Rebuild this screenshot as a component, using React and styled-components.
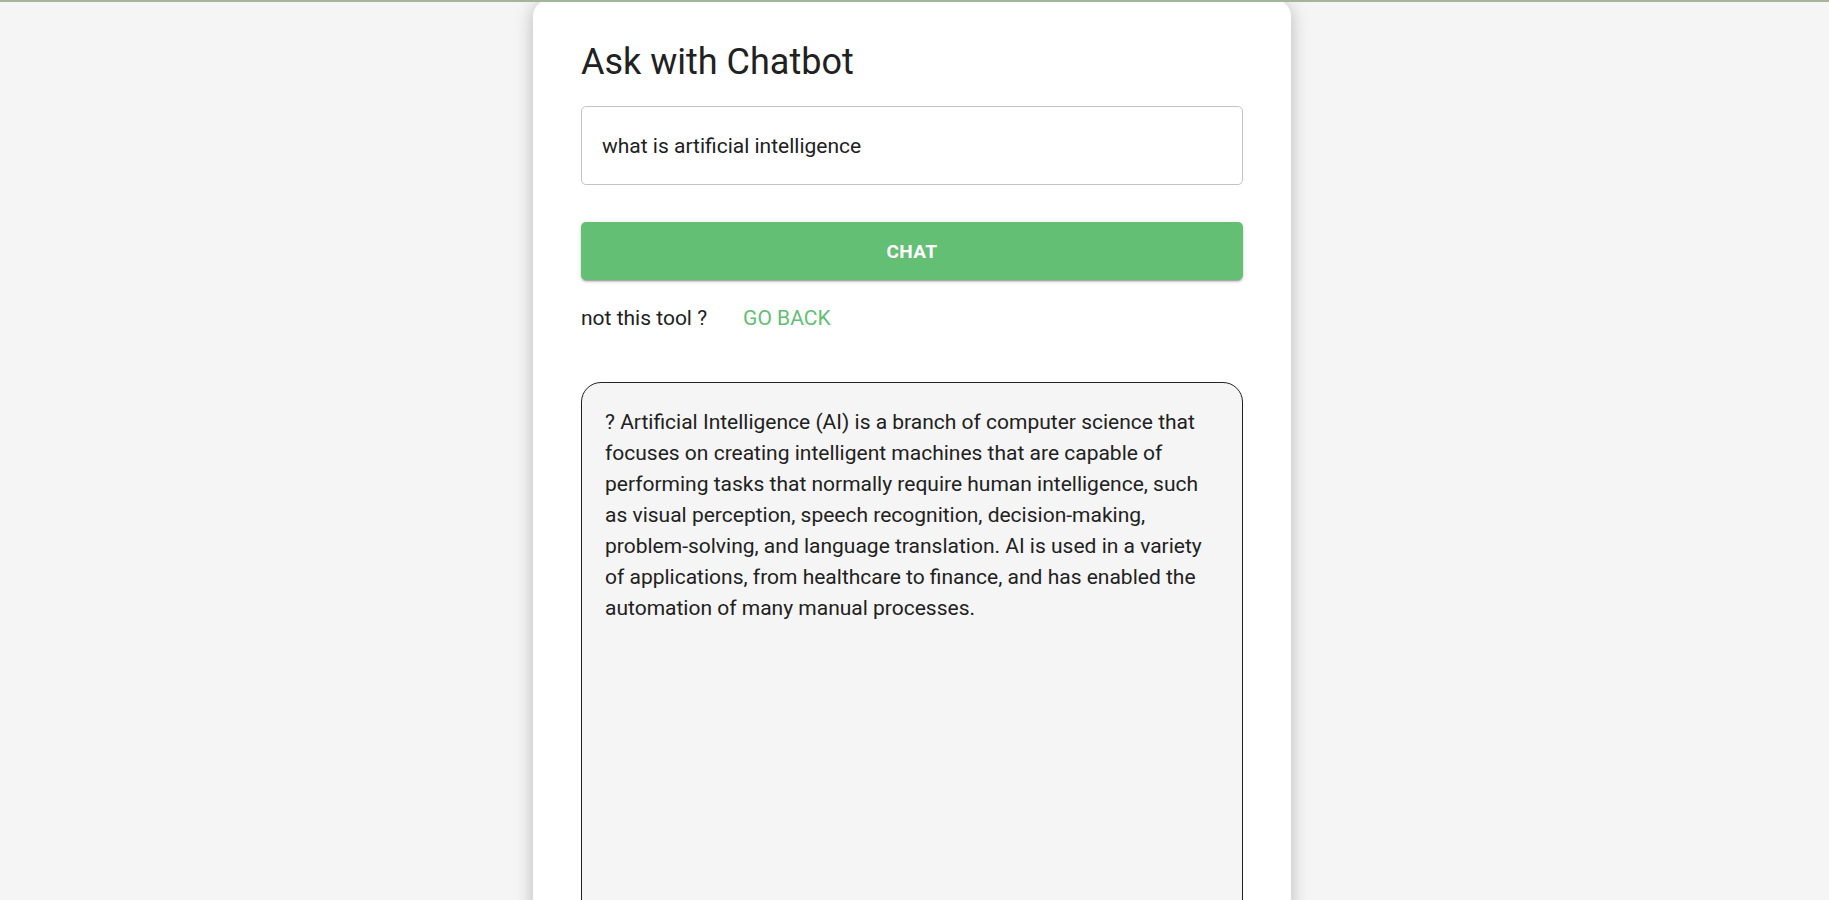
import { useState } from "react";
import styled, { createGlobalStyle } from "styled-components";

// Pantalla del chatbot: pregunta, boton de enviar y caja con la respuesta

const GlobalStyle = createGlobalStyle`
  html, body {
    margin: 0;
    padding: 0;
    background-color: #f5f5f5;
    font-family: Roboto, "Liberation Sans", Arial, sans-serif;
    color: #212121;
  }
  * {
    box-sizing: border-box;
  }
`;

const respuestaInicial =
  "? Artificial Intelligence (AI) is a branch of computer science that focuses on creating intelligent machines that are capable of performing tasks that normally require human intelligence, such as visual perception, speech recognition, decision-making, problem-solving, and language translation. AI is used in a variety of applications, from healthcare to finance, and has enabled the automation of many manual processes.";

const App = () => {
  const [pregunta, setPregunta] = useState("what is artificial intelligence");
  const [respuesta] = useState(respuestaInicial);

  return (
    <>
      <GlobalStyle />
      <TopLine />
      <Page>
        <Card>
          <Title>Ask with Chatbot</Title>

          <Input
            value={pregunta}
            onChange={(e) => setPregunta(e.target.value)}
          />

          <ChatButton>Chat</ChatButton>

          <BackRow>
            <span>not this tool ?</span>
            <LinkButton>Go back</LinkButton>
          </BackRow>

          <Answer>{respuesta}</Answer>
        </Card>
      </Page>
    </>
  );
};

export default App;

const TopLine = styled.div`
  position: fixed;
  top: 0;
  left: 0;
  right: 0;
  height: 2px;
  background-color: #a3b59f;
  z-index: 10;
`;

const Page = styled.div`
  display: flex;
  justify-content: center;
  padding-right: 5px;
  min-height: 100vh;
`;

const Card = styled.div`
  width: 758px;
  min-height: 1000px;
  padding: 41px 48px 48px;
  background-color: white;
  border-radius: 16px;
  box-shadow: 0 3px 18px rgba(0, 0, 0, 0.25);
  display: flex;
  flex-direction: column;
`;

const Title = styled.h1`
  margin: 0;
  font-size: 36px;
  line-height: 1.2;
  font-weight: 400;
  color: #212121;
`;

const Input = styled.input`
  margin-top: 22px;
  width: 100%;
  height: 79px;
  padding: 0 20px;
  border: 1px solid #c4c4c4;
  border-radius: 5px;
  font-family: inherit;
  font-size: 21px;
  color: #212121;
  outline: none;
  &:focus {
    border-color: #62bf73;
  }
`;

const ChatButton = styled.button`
  margin-top: 37px;
  width: 100%;
  height: 58px;
  border: none;
  border-radius: 5px;
  background-color: #62bf73;
  color: white;
  font-family: inherit;
  font-size: 19px;
  font-weight: 700;
  letter-spacing: 0.4px;
  text-transform: uppercase;
  box-shadow: 0 3px 1px -2px rgba(0, 0, 0, 0.2), 0 2px 2px 0 rgba(0, 0, 0, 0.14),
    0 1px 5px 0 rgba(0, 0, 0, 0.12);
  cursor: pointer;
  transition: 0.2s ease-in-out;
  &:hover {
    background-color: #55b066;
  }
`;

const BackRow = styled.div`
  margin-top: 23px;
  display: flex;
  align-items: center;
  gap: 36px;
  font-size: 21px;
  line-height: 31.5px;
`;

const LinkButton = styled.button`
  padding: 0;
  border: none;
  background: none;
  color: #62bf73;
  font-family: inherit;
  font-size: 21px;
  line-height: 31.5px;
  text-transform: uppercase;
  cursor: pointer;
  &:hover {
    text-decoration: underline;
  }
`;

const Answer = styled.div`
  margin-top: 47px;
  min-height: 600px;
  padding: 24px 28px 24px 23px;
  border: 1px solid #222;
  border-radius: 20px;
  background-color: #f5f5f5;
  font-size: 21px;
  line-height: 31px;
  color: #212121;
  white-space: pre-wrap;
`;
